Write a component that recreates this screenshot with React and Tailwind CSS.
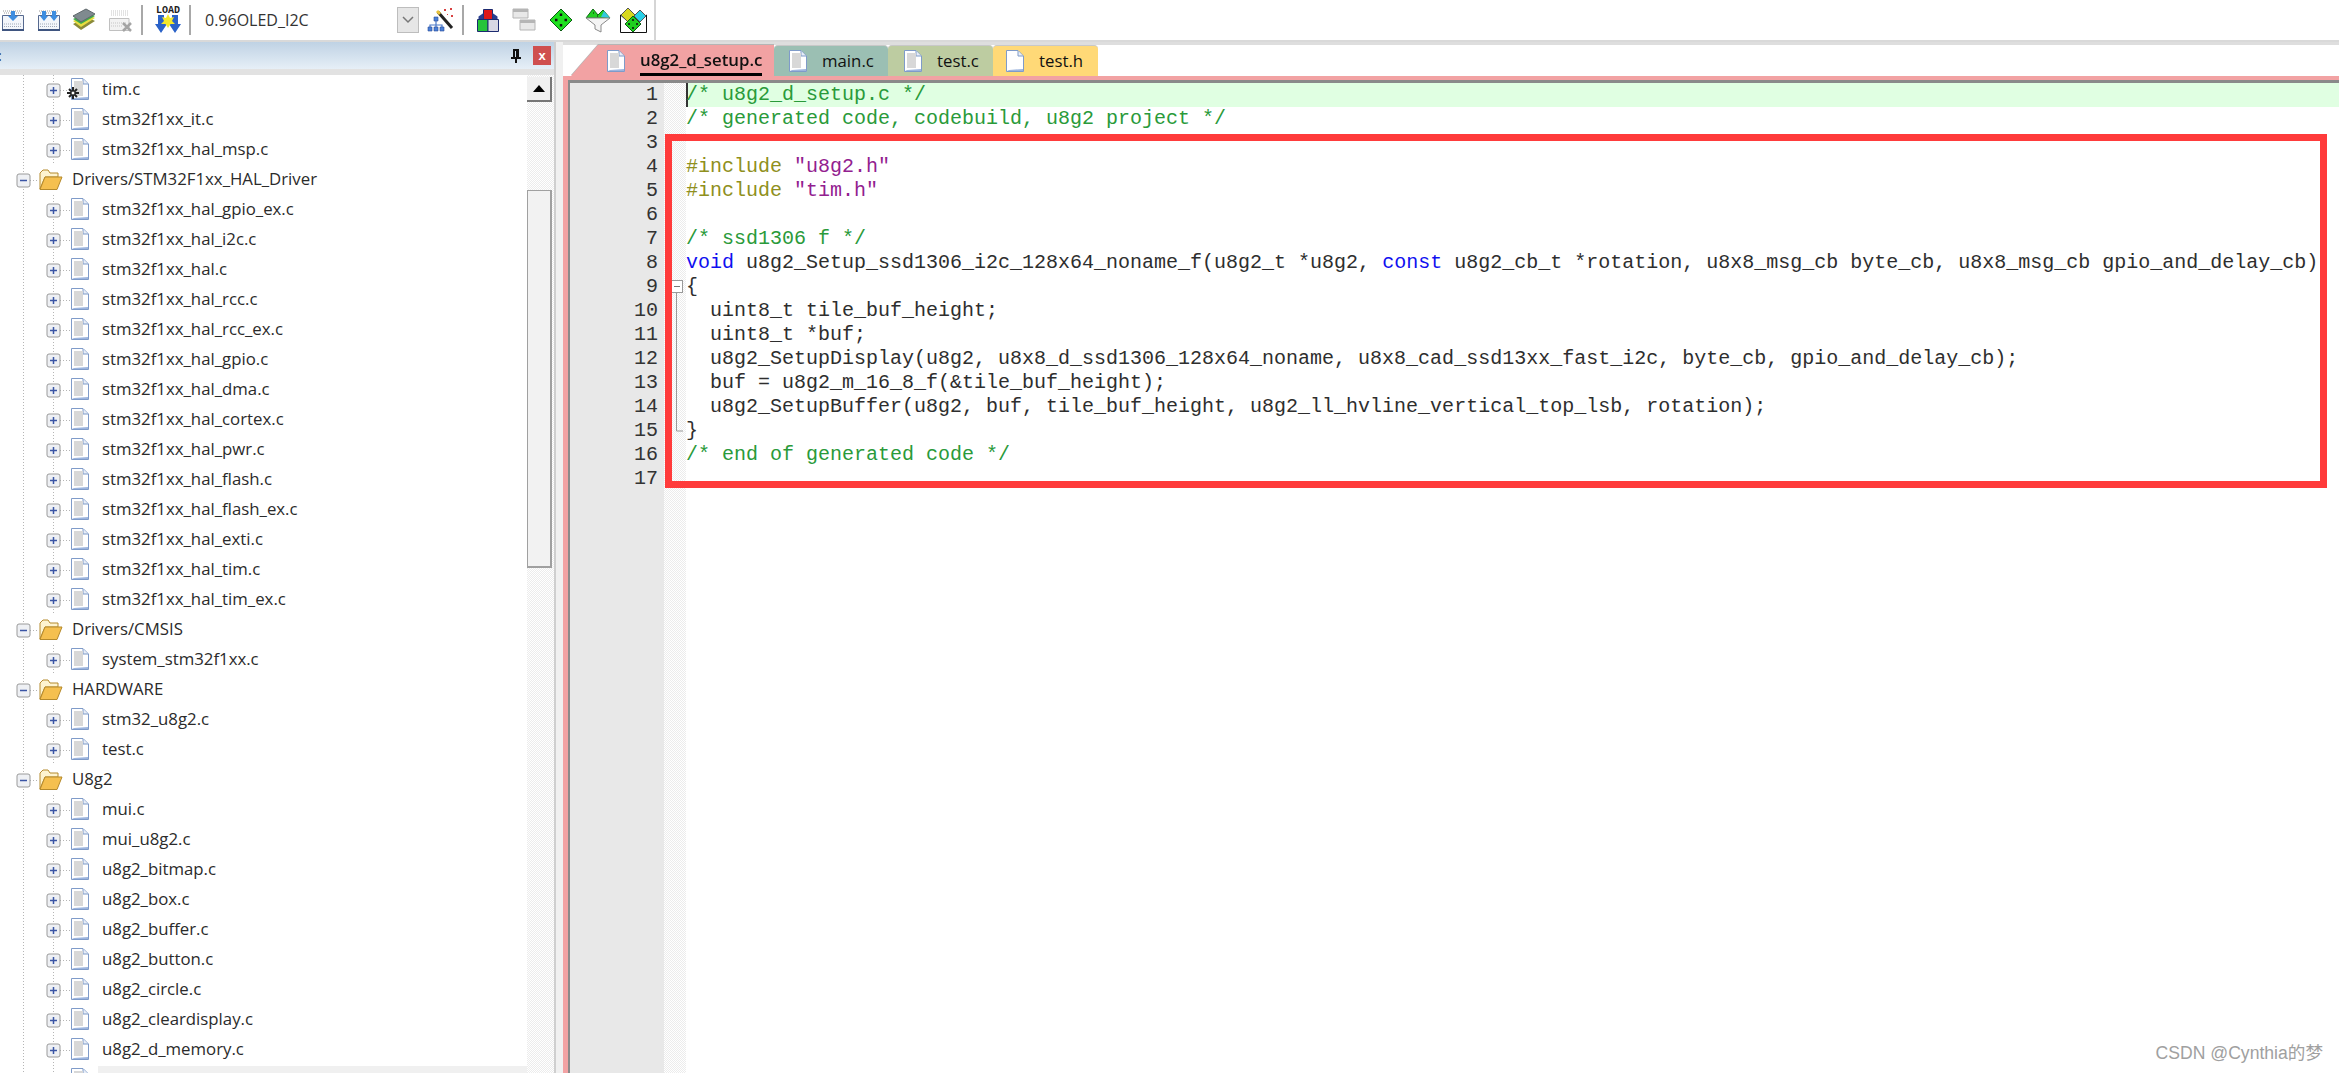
import React from "react";

const treeRows = [
  ["file", "tim.c", "gear"],
  ["file", "stm32f1xx_it.c"],
  ["file", "stm32f1xx_hal_msp.c"],
  ["folder", "Drivers/STM32F1xx_HAL_Driver"],
  ["file", "stm32f1xx_hal_gpio_ex.c"],
  ["file", "stm32f1xx_hal_i2c.c"],
  ["file", "stm32f1xx_hal.c"],
  ["file", "stm32f1xx_hal_rcc.c"],
  ["file", "stm32f1xx_hal_rcc_ex.c"],
  ["file", "stm32f1xx_hal_gpio.c"],
  ["file", "stm32f1xx_hal_dma.c"],
  ["file", "stm32f1xx_hal_cortex.c"],
  ["file", "stm32f1xx_hal_pwr.c"],
  ["file", "stm32f1xx_hal_flash.c"],
  ["file", "stm32f1xx_hal_flash_ex.c"],
  ["file", "stm32f1xx_hal_exti.c"],
  ["file", "stm32f1xx_hal_tim.c"],
  ["file", "stm32f1xx_hal_tim_ex.c"],
  ["folder", "Drivers/CMSIS"],
  ["file", "system_stm32f1xx.c"],
  ["folder", "HARDWARE"],
  ["file", "stm32_u8g2.c"],
  ["file", "test.c"],
  ["folder", "U8g2"],
  ["file", "mui.c"],
  ["file", "mui_u8g2.c"],
  ["file", "u8g2_bitmap.c"],
  ["file", "u8g2_box.c"],
  ["file", "u8g2_buffer.c"],
  ["file", "u8g2_button.c"],
  ["file", "u8g2_circle.c"],
  ["file", "u8g2_cleardisplay.c"],
  ["file", "u8g2_d_memory.c"],
  ["file", "u8g2_d_setup.c"],
];

const C = ({ children }) => <span className="text-[#2a9a3a]">{children}</span>;
const K = ({ children }) => <span className="text-[#1010f0]">{children}</span>;
const P = ({ children }) => <span className="text-[#8f8f20]">{children}</span>;
const S = ({ children }) => <span className="text-[#92208f]">{children}</span>;

const codeLines = [
  <C>{"/* u8g2_d_setup.c */"}</C>,
  <C>{"/* generated code, codebuild, u8g2 project */"}</C>,
  "",
  <>
    <P>#include </P>
    <S>"u8g2.h"</S>
  </>,
  <>
    <P>#include </P>
    <S>"tim.h"</S>
  </>,
  "",
  <C>{"/* ssd1306 f */"}</C>,
  <>
    <K>void</K>
    {" u8g2_Setup_ssd1306_i2c_128x64_noname_f(u8g2_t *u8g2, "}
    <K>const</K>
    {" u8g2_cb_t *rotation, u8x8_msg_cb byte_cb, u8x8_msg_cb gpio_and_delay_cb)"}
  </>,
  "{",
  "  uint8_t tile_buf_height;",
  "  uint8_t *buf;",
  "  u8g2_SetupDisplay(u8g2, u8x8_d_ssd1306_128x64_noname, u8x8_cad_ssd13xx_fast_i2c, byte_cb, gpio_and_delay_cb);",
  "  buf = u8g2_m_16_8_f(&tile_buf_height);",
  "  u8g2_SetupBuffer(u8g2, buf, tile_buf_height, u8g2_ll_hvline_vertical_top_lsb, rotation);",
  "}",
  <C>{"/* end of generated code */"}</C>,
  "",
];

const tabs = [
  { name: "u8g2_d_setup.c", box: "w-[203px] pl-[36px] bg-[#f2a2a3] [clip-path:polygon(0_100%,27px_0,100%_0,100%_100%)]", wrap: "[filter:drop-shadow(0_-1px_0_#b5b5b5)]", active: true },
  { name: "main.c", box: "w-[114px] pl-[15px] bg-[#9bbfb3] rounded-t-[4px] border-t border-[#c8c8c8]" },
  { name: "test.c", box: "w-[105px] pl-[16px] bg-[#bdcca1] rounded-t-[4px] border-t border-[#c8c8c8]" },
  { name: "test.h", box: "w-[105px] pl-[13px] bg-[#ffd977] rounded-t-[4px] border-t border-[#c8c8c8]", plain: true },
];

const DocShape = ({ x = 0, y = 0, plain }) => (
  <g transform={`translate(${x} ${y})`}>
    <path d="M.5.5H12L17.5 6V21.5H.5Z" fill="#fff" stroke="#7f9bc9" />
    <path d="M1 21H17V19L3 20Z" fill="#9db5de" />
    <path d="M12 1V6H17" fill="#e8eef8" stroke="#7f9bc9" />
    {!plain && <rect x="3" y="3" width="9" height="15" fill="#d8d8d8" />}
  </g>
);

const DocIcon = ({ plain }) => (
  <svg width="18" height="22" className="shrink-0">
    <DocShape plain={plain} />
  </svg>
);

const FilePrefix = ({ gear }) => (
  <svg width="90" height="30" className="shrink-0">
    <path d="M23.5 0V30M53.5 0V30M60 15.5H70" stroke="#b5b5b5" strokeDasharray="1 2" fill="none" />
    <rect x="47" y="9" width="13" height="13" rx="2" fill="#eef0f4" stroke="#9a9a9a" />
    <path d="M50 15.5H57M53.5 12V19" stroke="#3a55a5" strokeWidth="1.5" />
    <DocShape x={71} y={3} />
    {gear && (
      <g stroke="#222" strokeWidth="2">
        <path d="M73 12V24M67 18H79M69 14L77 22M77 14L69 22" />
        <circle cx="73" cy="18" r="2" fill="#fff" strokeWidth="1" />
      </g>
    )}
  </svg>
);

const FolderPrefix = () => (
  <svg width="66" height="30" className="shrink-0">
    <path d="M23.5 0V30M30 15.5H39" stroke="#b5b5b5" strokeDasharray="1 2" fill="none" />
    <rect x="17" y="9" width="13" height="13" rx="2" fill="#eef0f4" stroke="#9a9a9a" />
    <path d="M20 15.5H27" stroke="#3a55a5" strokeWidth="1.5" />
    <path d="M40 24V8L43 5H48L50 8H58V12H45L40 24" fill="#fdf3cf" stroke="#b58a2c" />
    <path d="M40 24.5L45 12H62L57 24.5Z" fill="#f5c04f" stroke="#b58a2c" />
  </svg>
);

const ToolDown = ({ double }) => (
  <svg width="24" height="24" viewBox="0 0 24 24">
    <path d="M2 3H22M3 5H21" stroke="#9a9a9a" strokeDasharray="1 1" />
    <path d="M1.5 7.5H22.5V22.5H1.5Z" fill="#f3f6fb" stroke="#56698f" />
    <path d="M1 21H23V23H1Z" fill="#3f5580" />
    <path d="M3 16H21M3 18.5H21" stroke="#a0a8b8" strokeDasharray="1 1" />
    {double ? (
      <>
        <path d="M5 3H9V8H11L7 13L3 8H5Z" fill="#3d8de0" />
        <path d="M15 3H19V8H21L17 13L13 8H15Z" fill="#3d8de0" />
      </>
    ) : (
      <path d="M10 3H14V8H17L12 13L7 8H10Z" fill="#3d8de0" />
    )}
  </svg>
);

const ToolLayers = () => (
  <svg width="24" height="24" viewBox="0 0 24 24">
    <path d="M1 16L15 9L23 13L9 22Z" fill="#8a8a3a" />
    <path d="M1 13L15 6L23 10L9 19Z" fill="#e8dd40" />
    <path d="M1 11L15 4L23 8L9 16Z" fill="#3fae4a" />
    <path d="M1 8L14 1L23 6L9 14Z" fill="#7f8a8f" stroke="#5f686c" />
  </svg>
);

const ToolGreyed = () => (
  <svg width="24" height="24" viewBox="0 0 24 24">
    <path d="M3 3H20M3 5H20M3 7H20" stroke="#c5c5c5" strokeDasharray="1 1" />
    <path d="M1.5 10.5H21V22.5H1.5Z" fill="#f2f2f2" stroke="#c0c0c0" />
    <path d="M3 15H18M3 18H14" stroke="#c5c5c5" strokeDasharray="1 1" />
    <path d="M15 15L23 23M23 15L15 23" stroke="#a5a5a5" strokeWidth="2.5" />
  </svg>
);

const ToolLoad = () => (
  <svg width="26" height="32" viewBox="0 0 26 32">
    <text x="13" y="9" textAnchor="middle" fontSize="10" fontWeight="700" fill="#222" className="[font-family:'Liberation_Mono',monospace]">LOAD</text>
    <path d="M3 11H9V20H12L6 29L0 20H3Z" fill="#2a62c8" />
    <path d="M17 11H23V20H26L20 29L14 20H17Z" fill="#2a62c8" />
    <path d="M13 10L15 14L19 13L17 17L20 20L15.5 20L13 24L10.5 20L6 20L9 17L7 13L11 14Z" fill="#f5e82a" />
  </svg>
);

const ToolWizard = () => (
  <svg width="28" height="26" viewBox="0 0 28 26">
    <path d="M9 12V17M3 22V18H15V22M9 17V22" stroke="#4a78c8" fill="none" strokeWidth="1.2" />
    <path d="M7 10H11V14H7ZM1 20H5V24H1ZM7 20H11V24H7ZM13 20H17V24H13Z" fill="#4a80d8" stroke="#2a4a98" strokeWidth=".6" />
    <path d="M11 5L25 21" stroke="#222" strokeWidth="3" />
    <path d="M10 4L13 7" stroke="#e8c23a" strokeWidth="3" />
    <path d="M17 2H19V4H17ZM23 1H25V3H23ZM24 8H26V10H24ZM20 7H21V8H20Z" fill="#d84040" />
  </svg>
);

const ToolBlocks = () => (
  <svg width="22" height="24" viewBox="0 0 22 24">
    <path d="M6.5 1.5H15.5V11.5H6.5Z" fill="#e01818" stroke="#1c2a70" />
    <path d="M1.5 8.5L6.5 5V11.5H15.5V5L20.5 8.5V11.5H1.5Z" fill="#2a3f8f" />
    <path d="M.5 11.5H11V23.5H.5Z" fill="#26c43a" stroke="#1c2a70" />
    <path d="M11 11.5H21.5V23.5H11Z" fill="#d8d8e4" stroke="#1c2a70" />
  </svg>
);

const ToolWindows = () => (
  <svg width="24" height="24" viewBox="0 0 24 24">
    <path d="M1 1H16V10H1Z" fill="#e8e8e8" stroke="#b5b5b5" />
    <path d="M1 1H16V4H1Z" fill="#b5b5b5" />
    <path d="M8 12H23V22H8Z" fill="#e8e8e8" stroke="#b5b5b5" />
    <path d="M8 12H23V15H8Z" fill="#b5b5b5" />
  </svg>
);

const ToolDiamond = () => (
  <svg width="24" height="24" viewBox="0 0 24 24">
    <path d="M12 1L23 12L12 23L1 12Z" fill="#1fe01f" stroke="#0b5a12" />
    <path d="M12 5.5V8M12 16V18.5M6 12H8.5M15.5 12H18" stroke="#111" strokeWidth="2.4" />
  </svg>
);

const ToolFunnel = () => (
  <svg width="26" height="26" viewBox="0 0 26 26">
    <path d="M1 11L8 2L13 8L18 3L25 11Z" fill="#22d022" stroke="#0b6a12" />
    <path d="M16 10L19 4L25 11Z" fill="#33c8e0" />
    <path d="M1 11H25L16 18V25L10 22V18Z" fill="#f4f4f4" stroke="#8a8a8a" />
    <path d="M8 6H9M12 9H13" stroke="#111" />
  </svg>
);

const ToolMulti = () => (
  <svg width="27" height="26" viewBox="0 0 27 26">
    <path d="M.5 25.5V8L5 12H22L26.5 8V25.5Z" fill="#fff" stroke="#111" />
    <path d="M8 1L15 8L8 15L1 8Z" fill="#d8d820" stroke="#555" />
    <path d="M20 3L26 9L20 15L14 9Z" fill="#28d0e8" stroke="#555" />
    <path d="M13 9L21 17L13 25L5 17Z" fill="#1fd01f" stroke="#0b5a12" />
    <path d="M13 12V14M13 20V22M8 17H10M16 17H18" stroke="#111" strokeWidth="1.6" />
  </svg>
);

const Sep = ({ className }) => <div className={`w-[2px] h-[30px] bg-[#a8a8a8] ${className}`} />;

const Toolbar = () => (
  <div className="h-[42px] shrink-0 flex bg-white border-b-2 border-[#d9d9d9]">
    <div className="w-[656px] flex items-center border-r-2 border-[#d5d5d5]">
      <div className="ml-[1px]"><ToolDown /></div>
      <div className="ml-[12px]"><ToolDown double /></div>
      <div className="ml-[11px]"><ToolLayers /></div>
      <div className="ml-[12px]"><ToolGreyed /></div>
      <Sep className="ml-[9px]" />
      <div className="ml-[12px]"><ToolLoad /></div>
      <Sep className="ml-[8px]" />
      <div className="ml-[14px] w-[192px] text-[16px] text-[#333] [font-family:'Open_Sans',sans-serif]">0.96OLED_I2C</div>
      <div className="w-[22px] h-[26px] flex items-center justify-center bg-[#e6e6e6] border border-[#bdbdbd]">
        <svg width="14" height="8" viewBox="0 0 14 8">
          <path d="M2 1L7 6L12 1" stroke="#777" strokeWidth="1.5" fill="none" />
        </svg>
      </div>
      <div className="ml-[8px]"><ToolWizard /></div>
      <Sep className="ml-[7px]" />
      <div className="ml-[13px]"><ToolBlocks /></div>
      <div className="ml-[13px]"><ToolWindows /></div>
      <div className="ml-[13px]"><ToolDiamond /></div>
      <div className="ml-[12px]"><ToolFunnel /></div>
      <div className="ml-[9px]"><ToolMulti /></div>
    </div>
  </div>
);

const TreeRow = ({ kind, name, mark, last }) =>
  kind === "folder" ? (
    <div className="h-[30px] shrink-0 flex items-center">
      <FolderPrefix />
      <span className="ml-[6px] pb-[2px]">{name}</span>
    </div>
  ) : (
    <div className="h-[30px] shrink-0 flex items-center">
      <FilePrefix gear={mark === "gear"} />
      <span className={`ml-[8px] pl-[4px] pb-[2px] ${last ? "w-[429px] bg-[#f0f0f0]" : ""}`}>{name}</span>
    </div>
  );

const Scrollbar = () => (
  <div className="w-[27px] shrink-0 flex flex-col bg-[repeating-conic-gradient(#ececec_0_25%,#fff_0_50%)] bg-[length:2px_2px]">
    <div className="w-[25px] h-[25px] mt-[2px] flex items-center justify-center bg-[#f0f0f0] border-r-2 border-b-2 border-[#777]">
      <svg width="12" height="7" viewBox="0 0 12 7">
        <path d="M0 7L6 0L12 7Z" fill="#000" />
      </svg>
    </div>
    <div className="w-[25px] h-[378px] mt-[88px] bg-[#f2f2f2] border-r-2 border-b-2 border-l border-t border-[#a0a0a0]" />
  </div>
);

const ProjectPanel = () => (
  <div className="w-[556px] shrink-0 flex flex-col border-r-2 border-[#cfcfcf]">
    <div className="h-[27px] shrink-0 flex items-center bg-gradient-to-b from-[#bfd2e4] to-[#e6eff7]">
      <span className="text-[14px] leading-none text-[#333] -ml-[2px]">:</span>
      <div className="ml-auto mr-[3px] flex items-center gap-[10px]">
        <svg width="14" height="16" viewBox="0 0 14 16">
          <path d="M4 1H10V9H12V11H8V15H6V11H2V9H4Z M6 3V9H7V3Z" fill="#111" fillRule="evenodd" />
        </svg>
        <div className="w-[18px] h-[19px] flex items-center justify-center bg-[#cf4f4f] text-white text-[13px] font-bold leading-none [font-family:'Liberation_Sans',sans-serif]">x</div>
      </div>
    </div>
    <div className="h-[6px] shrink-0 bg-[#e2e2e2]" />
    <div className="flex-1 min-h-0 flex overflow-hidden bg-white">
      <div className="flex-1 min-w-0 flex flex-col text-[16.8px] text-[#2b2b2b] whitespace-nowrap [font-family:'Open_Sans',sans-serif]">
        {treeRows.map(([kind, name, mark], i) => (
          <TreeRow key={name + i} kind={kind} name={name} mark={mark} last={i === treeRows.length - 1} />
        ))}
      </div>
      <Scrollbar />
    </div>
  </div>
);

const TabStrip = () => (
  <div className="h-[34px] shrink-0 flex items-end pl-[8px] border-t-[3px] border-[#dedede] bg-white text-[16.8px] text-[#111] [font-family:'Open_Sans',sans-serif]">
    {tabs.map((t) => (
      <div key={t.name} className={t.wrap}>
        <div className={`h-[31px] flex items-center gap-[15px] ${t.box}`}>
          <DocIcon plain={t.plain} />
          <span className={t.active ? "font-semibold leading-[26px] border-b-[3px] border-black mt-[1px]" : "font-medium"}>{t.name}</span>
        </div>
      </div>
    ))}
  </div>
);

const FoldMark = ({ line }) => {
  if (line === 9)
    return (
      <svg width="22" height="24">
        <rect x="7.5" y="5.5" width="11" height="12" fill="#fff" stroke="#999" />
        <path d="M10 11.5H16" stroke="#777" />
        <path d="M12.5 18V24" stroke="#999" />
      </svg>
    );
  if (line > 9 && line < 15)
    return (
      <svg width="22" height="24">
        <path d="M12.5 0V24" stroke="#999" />
      </svg>
    );
  if (line === 15)
    return (
      <svg width="22" height="24">
        <path d="M12.5 0V12H19" stroke="#999" fill="none" />
      </svg>
    );
  return null;
};

const Editor = () => (
  <div className="flex-1 min-h-0 flex flex-col border-l-[5px] border-t-4 border-[#f2a2a3]">
    <div className="flex-1 min-h-0 flex flex-col border-l-2 border-t-[3px] border-[#8a8a8a] text-[20px] leading-[24px] whitespace-pre [font-family:'Liberation_Mono',monospace]">
      {codeLines.map((line, i) => (
        <div key={i} className="h-[24px] shrink-0 flex">
          <div className="w-[94px] shrink-0 pr-[6px] text-right bg-[#e8e8e8] text-[#333]">{i + 1}</div>
          <div className="w-[22px] shrink-0 bg-[repeating-conic-gradient(#ececec_0_25%,#fff_0_50%)] bg-[length:2px_2px]">
            <FoldMark line={i + 1} />
          </div>
          <div className={`flex-1 text-[#2e2e2e] ${i === 0 ? "bg-[#e0ffe2] shadow-[inset_2px_0_0_#333]" : "bg-white"}`}>{line}</div>
        </div>
      ))}
      <div className="flex-1 flex">
        <div className="w-[94px] shrink-0 bg-[#e8e8e8]" />
        <div className="w-[22px] shrink-0 bg-[repeating-conic-gradient(#ececec_0_25%,#fff_0_50%)] bg-[length:2px_2px]" />
        <div className="flex-1 bg-white" />
      </div>
    </div>
  </div>
);

export default function App() {
  return (
    <div className="relative w-[2339px] h-[1073px] overflow-hidden flex flex-col bg-white">
      <Toolbar />
      <div className="flex-1 min-h-0 flex">
        <ProjectPanel />
        <div className="w-[7px] shrink-0 bg-[#f0f0f0]" />
        <div className="flex-1 min-w-0 flex flex-col">
          <TabStrip />
          <Editor />
        </div>
      </div>
      {/* annotation drawn over the code */}
      <div className="absolute left-[665px] top-[134px] w-[1662px] h-[354px] border-[7px] border-[#ff3b3b]" />
      <div className="absolute right-[16px] top-[1042px] text-[17.6px] text-[#a0a0a0] leading-[22px] [font-family:'Liberation_Sans','Noto_Sans_CJK_SC',sans-serif]">
        CSDN @Cynthia的梦
      </div>
    </div>
  );
}
